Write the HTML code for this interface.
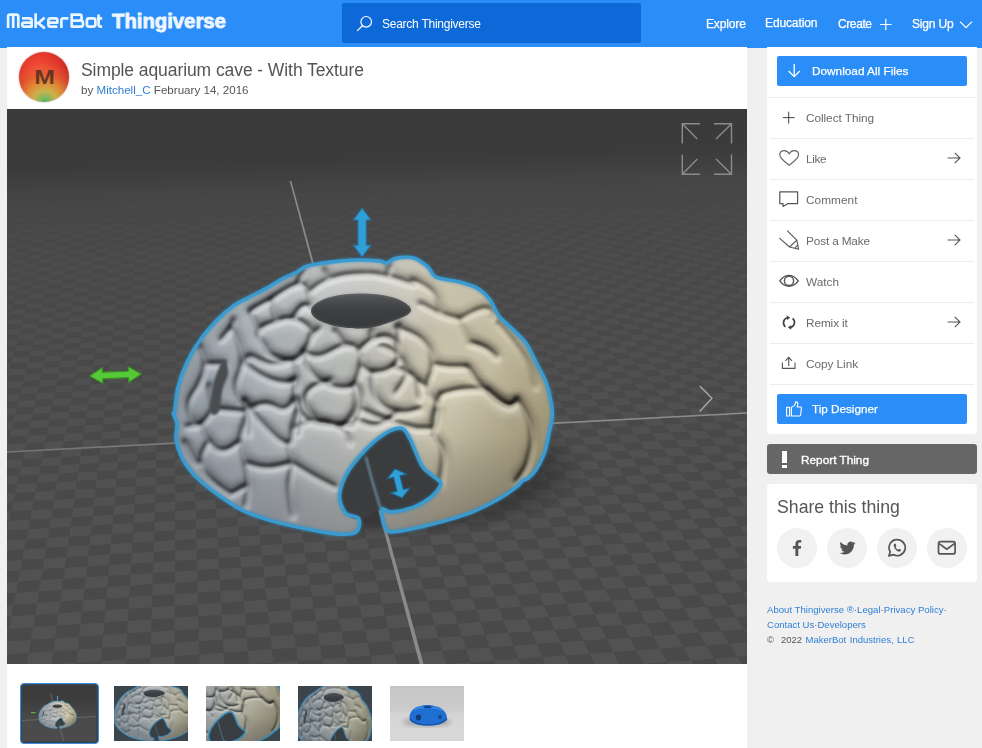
<!DOCTYPE html>
<html>
<head>
<meta charset="utf-8">
<title>Simple aquarium cave - With Texture</title>
<style>
*{box-sizing:border-box;margin:0;padding:0}
html,body{width:982px;height:748px;overflow:hidden}
body{background:#f0f0f0;font-family:"Liberation Sans",sans-serif;color:#555;position:relative}
a{text-decoration:none;color:#2f7fd6}
.abs{position:absolute}
.row,.nav,.ft,#title,#by,.btn span,#report span,#search span,.gs{will-change:transform}
#hdr{position:absolute;left:0;top:0;width:982px;height:47.5px;background:#2b8df7}
#search{position:absolute;left:342px;top:3px;width:299px;height:40px;background:#0d68d8;border-radius:2px}
#search span{position:absolute;left:40px;top:14px;font-size:12px;color:#fff;letter-spacing:-0.25px;white-space:nowrap}
.nav{position:absolute;top:17px;font-size:12px;color:#fff;white-space:nowrap;-webkit-text-stroke:.25px #fff}
#main{position:absolute;left:7px;top:47px;width:740px;height:701px;background:#fff}
#title{position:absolute;left:80.5px;top:60px;font-size:17.5px;color:#555;white-space:nowrap;letter-spacing:-0.08px}
#by{position:absolute;left:81px;top:82.5px;font-size:11.6px;color:#555;white-space:nowrap}
#viewer{position:absolute;left:7px;top:109px;width:740px;height:555px;background:#3b3b3b;overflow:hidden}
.th{position:absolute;top:685.5px;width:74px;height:55px;background:#444;overflow:hidden}
#side{position:absolute;left:767px;top:47px;width:210px;height:387px;background:#fff;border-radius:0 0 4px 4px}
.btn{position:absolute;left:777px;width:190px;height:30px;background:#2b8df7;border-radius:2px;color:#fff;font-size:12px}
.btn span{position:absolute;left:35px;top:8px;white-space:nowrap;-webkit-text-stroke:.25px #fff}
.sep{position:absolute;left:770px;width:204px;height:1px;background:#ededed}
.row{position:absolute;left:806px;font-size:11.8px;color:#6a6a6a;white-space:nowrap}
.ico{position:absolute}
#report{position:absolute;left:767px;top:444px;width:210px;height:30px;background:#666;border-radius:3px;color:#fff;font-size:12px}
#share{position:absolute;left:767px;top:484px;width:210px;height:98px;background:#fff;border-radius:4px}
.circ{position:absolute;top:528px;width:40px;height:40px;border-radius:20px;background:#f1f1f1}
.ft{position:absolute;left:767px;font-size:9.5px;color:#555;white-space:nowrap}
</style>
</head>
<body>
<div id="hdr">
  <svg class="abs" style="left:0;top:0" width="240" height="47" viewBox="0 0 240 47">
    <g fill="none" stroke="#eaf5ff" stroke-width="2.7" stroke-linejoin="round" stroke-linecap="butt">
      <path d="M8.1,28 V16.6 Q8.1,14.6 10.1,14.6 H16.3 Q18.3,14.6 18.3,16.6 V28 M13.2,14.6 V28"/>
      <path d="M22,18.4 H29.6 Q31.6,18.4 31.6,20.4 V26.6 H24 Q22.2,26.6 22.2,24.6 Q22.2,22.6 24,22.6 H31.6"/>
      <path d="M35.6,13.3 V28 M35.6,23.2 H38.4 L44.6,17.6 M38.4,23.2 L44.8,28.4"/>
      <path d="M57.4,26.6 H50.4 Q48.4,26.6 48.4,24.6 V20.4 Q48.4,18.4 50.4,18.4 H55.4 Q57.4,18.4 57.4,20.4 V22.6 H48.4"/>
      <path d="M61.4,28 V20.4 Q61.4,18.4 63.4,18.4 H68.4"/>
      <path d="M71.7,13.3 V26.6 H81 Q83,26.6 83,24.6 V22.6 Q83,20.6 81,20.6 H71.7 M70.4,14.6 H79.6 Q81.6,14.6 81.6,16.6 V18.6 Q81.6,20.6 79.6,20.6"/>
      <path d="M88.9,18.4 H93.4 Q95.4,18.4 95.4,20.4 V24.6 Q95.4,26.6 93.4,26.6 H88.9 Q86.9,26.6 86.9,24.6 V20.4 Q86.9,18.4 88.9,18.4 Z"/>
      <path d="M98.6,14.6 V24.6 Q98.6,26.6 100.6,26.6 H102.2 M97,18.4 H102.2"/>
    </g>
    <text x="112" y="28.2" font-family="Liberation Sans, sans-serif" font-weight="bold" font-size="20.3" fill="#eef7ff" stroke="#eef7ff" stroke-width="0.8">Thingiverse</text>
  </svg>
  <div id="search"><span>Search Thingiverse</span>
    <svg class="abs" style="left:13px;top:12px" width="20" height="18" viewBox="0 0 20 18"><circle cx="11.2" cy="6.8" r="5.3" fill="none" stroke="#fff" stroke-width="1.2"/><path d="M7.4,10.8 L2.4,15.6" stroke="#fff" stroke-width="1.3" stroke-linecap="round"/></svg>
  </div>
  <div class="nav" style="left:705.5px;letter-spacing:-0.13px">Explore</div>
  <div class="nav" style="left:765px;top:16px;letter-spacing:-0.12px">Education</div>
  <div class="nav" style="left:837.5px;letter-spacing:-0.4px">Create</div>
  <svg class="abs" style="left:879px;top:18px" width="14" height="14" viewBox="0 0 14 14"><path d="M1,6.5 H12.6 M6.8,0.7 V12.3" stroke="#fff" stroke-width="1.2" fill="none"/></svg>
  <div class="nav" style="left:911.5px;letter-spacing:-0.17px">Sign Up</div>
  <svg class="abs" style="left:959px;top:20px" width="14" height="10" viewBox="0 0 14 10"><path d="M1,1.6 L7,7.6 L13,1.6" stroke="#fff" stroke-width="1.2" fill="none"/></svg>
</div>
<div id="main"></div>
<div class="abs" style="left:19.2px;top:52px;width:49.6px;height:49.6px;border-radius:50%;background:radial-gradient(circle at 52% 100%,#4fb26a 0,#86b85a 9%,#c9b24c 20%,rgba(224,150,55,.9) 34%,rgba(228,110,48,.55) 50%,rgba(228,80,45,0) 72%),radial-gradient(circle at 40% 36%,#f4503a 0,#e63c2e 35%,#d22c28 60%,#a81a22 86%,#8a1a20 100%);box-shadow:0 0 1.5px rgba(120,20,20,.6)"></div>
<div class="abs" style="left:34px;top:66px;width:21px;height:23px;font-weight:bold;font-size:20px;line-height:23px;text-align:center;color:rgba(84,44,32,.85);transform:scaleX(1.24);">M</div>
<div id="title">Simple aquarium cave - With Texture</div>
<div id="by">by <a>Mitchell_C</a> February 14, 2016</div>
<!--VIEW_START--><div id="viewer">
<svg class="abs" style="left:0;top:0" width="740" height="555" viewBox="0 0 740 555"><defs><clipPath id="cu0"><path d="M-114.4,84.9 -102.3,84.5 -481.7,684.2 -511.4,686.4ZM-90.3,84.1 -78.3,83.8 -422.6,679.7 -452.1,681.9ZM-66.3,83.4 -54.3,83.0 -364.0,675.2 -393.2,677.4ZM-42.4,82.6 -30.5,82.2 -306.0,670.8 -335.0,673.0ZM-18.6,81.8 -6.7,81.4 -248.5,666.4 -277.2,668.6ZM5.2,81.0 17.0,80.7 -191.4,662.0 -219.9,664.2ZM28.8,80.3 40.6,79.9 -134.9,657.7 -163.1,659.9ZM52.4,79.5 64.2,79.1 -78.8,653.5 -106.8,655.6ZM75.9,78.7 87.6,78.4 -23.2,649.2 -51.0,651.3ZM99.3,78.0 111.0,77.6 31.9,645.0 4.4,647.1ZM122.6,77.2 134.2,76.9 86.5,640.9 59.3,642.9ZM145.8,76.5 157.4,76.1 140.7,636.7 113.7,638.8ZM169.0,75.7 180.5,75.4 194.4,632.6 167.6,634.7ZM192.0,75.0 203.5,74.6 247.7,628.6 221.1,630.6ZM215.0,74.2 226.5,73.9 300.6,624.5 274.2,626.6ZM237.9,73.5 249.3,73.1 353.0,620.5 326.8,622.5ZM260.7,72.7 272.1,72.4 404.9,616.6 379.0,618.6ZM283.5,72.0 294.8,71.6 456.5,612.7 430.8,614.6ZM306.1,71.3 317.4,70.9 507.6,608.8 482.1,610.7ZM328.7,70.5 339.9,70.2 558.3,604.9 533.0,606.8ZM351.2,69.8 362.4,69.4 608.6,601.1 583.5,603.0ZM373.6,69.1 384.8,68.7 658.5,597.3 633.6,599.2ZM395.9,68.4 407.0,68.0 707.9,593.5 683.2,595.4ZM418.2,67.6 429.3,67.3 757.0,589.8 732.5,591.6ZM440.3,66.9 451.4,66.6 805.7,586.0 781.4,587.9ZM462.4,66.2 473.4,65.8 854.0,582.4 829.9,584.2ZM484.4,65.5 495.4,65.1 901.9,578.7 878.0,580.5ZM506.4,64.8 517.3,64.4 949.5,575.1 925.8,576.9ZM528.2,64.1 539.1,63.7 996.6,571.5 973.1,573.3ZM550.0,63.4 560.9,63.0 1043.4,567.9 1020.1,569.7ZM571.7,62.7 582.6,62.3 1089.9,564.4 1066.7,566.2ZM593.4,61.9 604.1,61.6 1135.9,560.9 1113.0,562.6ZM614.9,61.2 625.7,60.9 1181.7,557.4 1158.8,559.1ZM636.4,60.6 647.1,60.2 1227.0,553.9 1204.4,555.7ZM657.8,59.9 668.5,59.5 1272.0,550.5 1249.6,552.2ZM679.1,59.2 689.8,58.8 1316.7,547.1 1294.4,548.8ZM700.4,58.5 711.0,58.1 1361.0,543.7 1338.9,545.4ZM721.6,57.8 732.1,57.4 1405.0,540.4 1383.1,542.0ZM742.7,57.1 753.2,56.8 1448.7,537.0 1426.9,538.7ZM763.7,56.4 774.2,56.1 1492.0,533.7 1470.4,535.4ZM784.7,55.7 795.2,55.4 1535.0,530.5 1513.6,532.1ZM805.6,55.1 816.0,54.7 1577.7,527.2 1556.4,528.8ZM826.4,54.4 836.8,54.0 1620.1,524.0 1598.9,525.6ZM847.2,53.7 857.5,53.4 1662.1,520.8 1641.1,522.4ZM867.8,53.0 878.2,52.7 1703.9,517.6 1683.0,519.2ZM888.5,52.4 898.7,52.0 1745.3,514.4 1724.6,516.0ZM909.0,51.7 919.2,51.4 1786.4,511.3 1765.9,512.9Z"/></clipPath><clipPath id="cu1"><path d="M-102.3,84.5 -90.3,84.1 -452.1,681.9 -481.7,684.2ZM-78.3,83.8 -66.3,83.4 -393.2,677.4 -422.6,679.7ZM-54.3,83.0 -42.4,82.6 -335.0,673.0 -364.0,675.2ZM-30.5,82.2 -18.6,81.8 -277.2,668.6 -306.0,670.8ZM-6.7,81.4 5.2,81.0 -219.9,664.2 -248.5,666.4ZM17.0,80.7 28.8,80.3 -163.1,659.9 -191.4,662.0ZM40.6,79.9 52.4,79.5 -106.8,655.6 -134.9,657.7ZM64.2,79.1 75.9,78.7 -51.0,651.3 -78.8,653.5ZM87.6,78.4 99.3,78.0 4.4,647.1 -23.2,649.2ZM111.0,77.6 122.6,77.2 59.3,642.9 31.9,645.0ZM134.2,76.9 145.8,76.5 113.7,638.8 86.5,640.9ZM157.4,76.1 169.0,75.7 167.6,634.7 140.7,636.7ZM180.5,75.4 192.0,75.0 221.1,630.6 194.4,632.6ZM203.5,74.6 215.0,74.2 274.2,626.6 247.7,628.6ZM226.5,73.9 237.9,73.5 326.8,622.5 300.6,624.5ZM249.3,73.1 260.7,72.7 379.0,618.6 353.0,620.5ZM272.1,72.4 283.5,72.0 430.8,614.6 404.9,616.6ZM294.8,71.6 306.1,71.3 482.1,610.7 456.5,612.7ZM317.4,70.9 328.7,70.5 533.0,606.8 507.6,608.8ZM339.9,70.2 351.2,69.8 583.5,603.0 558.3,604.9ZM362.4,69.4 373.6,69.1 633.6,599.2 608.6,601.1ZM384.8,68.7 395.9,68.4 683.2,595.4 658.5,597.3ZM407.0,68.0 418.2,67.6 732.5,591.6 707.9,593.5ZM429.3,67.3 440.3,66.9 781.4,587.9 757.0,589.8ZM451.4,66.6 462.4,66.2 829.9,584.2 805.7,586.0ZM473.4,65.8 484.4,65.5 878.0,580.5 854.0,582.4ZM495.4,65.1 506.4,64.8 925.8,576.9 901.9,578.7ZM517.3,64.4 528.2,64.1 973.1,573.3 949.5,575.1ZM539.1,63.7 550.0,63.4 1020.1,569.7 996.6,571.5ZM560.9,63.0 571.7,62.7 1066.7,566.2 1043.4,567.9ZM582.6,62.3 593.4,61.9 1113.0,562.6 1089.9,564.4ZM604.1,61.6 614.9,61.2 1158.8,559.1 1135.9,560.9ZM625.7,60.9 636.4,60.6 1204.4,555.7 1181.7,557.4ZM647.1,60.2 657.8,59.9 1249.6,552.2 1227.0,553.9ZM668.5,59.5 679.1,59.2 1294.4,548.8 1272.0,550.5ZM689.8,58.8 700.4,58.5 1338.9,545.4 1316.7,547.1ZM711.0,58.1 721.6,57.8 1383.1,542.0 1361.0,543.7ZM732.1,57.4 742.7,57.1 1426.9,538.7 1405.0,540.4ZM753.2,56.8 763.7,56.4 1470.4,535.4 1448.7,537.0ZM774.2,56.1 784.7,55.7 1513.6,532.1 1492.0,533.7ZM795.2,55.4 805.6,55.1 1556.4,528.8 1535.0,530.5ZM816.0,54.7 826.4,54.4 1598.9,525.6 1577.7,527.2ZM836.8,54.0 847.2,53.7 1641.1,522.4 1620.1,524.0ZM857.5,53.4 867.8,53.0 1683.0,519.2 1662.1,520.8ZM878.2,52.7 888.5,52.4 1724.6,516.0 1703.9,517.6ZM898.7,52.0 909.0,51.7 1765.9,512.9 1745.3,514.4ZM919.2,51.4 929.5,51.0 1806.9,509.7 1786.4,511.3Z"/></clipPath></defs><path d="M-114.4,84.9 929.5,51.0 1806.9,509.7 -511.4,686.4Z" fill="#494949"/><path d="M-114.4,84.9 929.5,51.0 934.5,53.7 -116.5,88.0ZM-118.6,91.2 939.6,56.4 944.8,59.1 -120.7,94.4ZM-122.8,97.7 950.1,61.8 955.4,64.6 -125.0,101.0ZM-127.2,104.4 960.9,67.5 966.3,70.3 -129.5,107.8ZM-131.8,111.2 971.9,73.2 977.6,76.2 -134.1,114.8ZM-136.4,118.3 983.3,79.2 989.1,82.2 -138.8,122.0ZM-141.3,125.6 995.0,85.3 1000.9,88.4 -143.7,129.4ZM-146.3,133.2 1007.0,91.6 1013.2,94.8 -148.8,137.0ZM-151.4,141.0 1019.4,98.1 1025.7,101.4 -154.0,145.0ZM-156.7,149.0 1032.2,104.7 1038.7,108.1 -159.4,153.1ZM-162.2,157.3 1045.3,111.6 1052.0,115.1 -165.0,161.6ZM-167.9,165.9 1058.9,118.7 1065.8,122.3 -170.8,170.3ZM-173.7,174.8 1072.9,126.0 1080.0,129.7 -176.8,179.4ZM-179.8,184.1 1087.3,133.5 1094.7,137.4 -183.0,188.8ZM-186.1,193.6 1102.2,141.3 1109.8,145.3 -189.4,198.5ZM-192.7,203.5 1117.6,149.4 1125.5,153.5 -196.0,208.6ZM-199.4,213.8 1133.5,157.7 1141.7,162.0 -202.9,219.0ZM-206.5,224.4 1149.9,166.3 1158.4,170.7 -210.1,229.9ZM-213.8,235.5 1167.0,175.2 1175.7,179.8 -217.5,241.2ZM-221.4,247.0 1184.6,184.4 1193.7,189.2 -225.3,252.9ZM-229.3,259.0 1202.9,194.0 1212.2,198.9 -233.4,265.2ZM-237.5,271.5 1221.8,203.9 1231.5,209.0 -241.8,277.9ZM-246.1,284.5 1241.4,214.1 1251.5,219.4 -250.5,291.2ZM-255.0,298.0 1261.8,224.8 1272.3,230.3 -259.7,305.0ZM-264.4,312.2 1283.0,235.9 1293.9,241.6 -269.2,319.5ZM-274.1,326.9 1305.0,247.4 1316.4,253.3 -279.2,334.6ZM-284.3,342.4 1327.9,259.3 1339.7,265.5 -289.6,350.4ZM-295.0,358.6 1351.8,271.8 1364.1,278.2 -300.6,367.0ZM-306.2,375.6 1376.6,284.8 1389.4,291.5 -312.0,384.4ZM-318.0,393.4 1402.5,298.4 1415.9,305.4 -324.1,402.6ZM-330.3,412.1 1429.6,312.5 1443.6,319.8 -336.7,421.8ZM-343.3,431.8 1457.9,327.3 1472.5,334.9 -350.1,442.0ZM-357.0,452.5 1487.4,342.7 1502.7,350.7 -364.1,463.3ZM-371.4,474.4 1518.4,358.9 1534.4,367.3 -379.0,485.8ZM-386.7,497.5 1550.8,375.9 1567.7,384.7 -394.6,509.5ZM-402.8,521.9 1584.9,393.7 1602.5,402.9 -411.2,534.7ZM-419.9,547.8 1620.7,412.4 1639.2,422.1 -428.8,561.3ZM-438.0,575.3 1658.3,432.1 1677.8,442.3 -447.5,589.7ZM-457.3,604.5 1697.9,452.8 1718.5,463.6 -467.4,619.8ZM-477.9,635.7 1739.7,474.6 1761.5,486.0 -488.7,652.0ZM-499.8,668.9 1783.9,497.7 1806.9,509.7 -511.4,686.4Z" fill="#525252" clip-path="url(#cu0)"/><path d="M-116.5,88.0 934.5,53.7 939.6,56.4 -118.6,91.2ZM-120.7,94.4 944.8,59.1 950.1,61.8 -122.8,97.7ZM-125.0,101.0 955.4,64.6 960.9,67.5 -127.2,104.4ZM-129.5,107.8 966.3,70.3 971.9,73.2 -131.8,111.2ZM-134.1,114.8 977.6,76.2 983.3,79.2 -136.4,118.3ZM-138.8,122.0 989.1,82.2 995.0,85.3 -141.3,125.6ZM-143.7,129.4 1000.9,88.4 1007.0,91.6 -146.3,133.2ZM-148.8,137.0 1013.2,94.8 1019.4,98.1 -151.4,141.0ZM-154.0,145.0 1025.7,101.4 1032.2,104.7 -156.7,149.0ZM-159.4,153.1 1038.7,108.1 1045.3,111.6 -162.2,157.3ZM-165.0,161.6 1052.0,115.1 1058.9,118.7 -167.9,165.9ZM-170.8,170.3 1065.8,122.3 1072.9,126.0 -173.7,174.8ZM-176.8,179.4 1080.0,129.7 1087.3,133.5 -179.8,184.1ZM-183.0,188.8 1094.7,137.4 1102.2,141.3 -186.1,193.6ZM-189.4,198.5 1109.8,145.3 1117.6,149.4 -192.7,203.5ZM-196.0,208.6 1125.5,153.5 1133.5,157.7 -199.4,213.8ZM-202.9,219.0 1141.7,162.0 1149.9,166.3 -206.5,224.4ZM-210.1,229.9 1158.4,170.7 1167.0,175.2 -213.8,235.5ZM-217.5,241.2 1175.7,179.8 1184.6,184.4 -221.4,247.0ZM-225.3,252.9 1193.7,189.2 1202.9,194.0 -229.3,259.0ZM-233.4,265.2 1212.2,198.9 1221.8,203.9 -237.5,271.5ZM-241.8,277.9 1231.5,209.0 1241.4,214.1 -246.1,284.5ZM-250.5,291.2 1251.5,219.4 1261.8,224.8 -255.0,298.0ZM-259.7,305.0 1272.3,230.3 1283.0,235.9 -264.4,312.2ZM-269.2,319.5 1293.9,241.6 1305.0,247.4 -274.1,326.9ZM-279.2,334.6 1316.4,253.3 1327.9,259.3 -284.3,342.4ZM-289.6,350.4 1339.7,265.5 1351.8,271.8 -295.0,358.6ZM-300.6,367.0 1364.1,278.2 1376.6,284.8 -306.2,375.6ZM-312.0,384.4 1389.4,291.5 1402.5,298.4 -318.0,393.4ZM-324.1,402.6 1415.9,305.4 1429.6,312.5 -330.3,412.1ZM-336.7,421.8 1443.6,319.8 1457.9,327.3 -343.3,431.8ZM-350.1,442.0 1472.5,334.9 1487.4,342.7 -357.0,452.5ZM-364.1,463.3 1502.7,350.7 1518.4,358.9 -371.4,474.4ZM-379.0,485.8 1534.4,367.3 1550.8,375.9 -386.7,497.5ZM-394.6,509.5 1567.7,384.7 1584.9,393.7 -402.8,521.9ZM-411.2,534.7 1602.5,402.9 1620.7,412.4 -419.9,547.8ZM-428.8,561.3 1639.2,422.1 1658.3,432.1 -438.0,575.3ZM-447.5,589.7 1677.8,442.3 1697.9,452.8 -457.3,604.5ZM-467.4,619.8 1718.5,463.6 1739.7,474.6 -477.9,635.7ZM-488.7,652.0 1761.5,486.0 1783.9,497.7 -499.8,668.9Z" fill="#525252" clip-path="url(#cu1)"/></svg>
<div class="abs" style="left:0;top:0;width:740px;height:555px;background:linear-gradient(178.3deg,#3a3a3a 0,#3b3b3b 60px,#404040 76px,#444 86px,rgba(70,70,70,.86) 102px,rgba(71,71,71,.62) 140px,rgba(72,72,72,.38) 215px,rgba(72,72,72,.15) 330px,rgba(72,72,72,0) 460px)"></div>
<div class="abs" style="left:190px;top:290px;width:390px;height:140px;border-radius:50%;background:radial-gradient(closest-side,rgba(30,30,30,.6) 0,rgba(30,30,30,.5) 70%,rgba(30,30,30,0) 100%);"></div>

<svg class="abs" style="left:0;top:0" width="740" height="555" viewBox="0 0 740 555">
<defs>
<linearGradient id="dg" x1="0" y1="0" x2="1" y2="0"><stop offset="0" stop-color="#96a0a9"/><stop offset=".22" stop-color="#afb6bb"/><stop offset=".48" stop-color="#c4c6c2"/><stop offset=".72" stop-color="#d1c9ae"/><stop offset="1" stop-color="#c3b896"/></linearGradient>
<linearGradient id="dv" x1="0" y1="0" x2="0" y2="1"><stop offset="0" stop-color="#fff" stop-opacity=".2"/><stop offset=".4" stop-color="#fff" stop-opacity="0"/><stop offset=".65" stop-color="#223" stop-opacity="0"/><stop offset="1" stop-color="#223" stop-opacity=".28"/></linearGradient>
<clipPath id="dc"><path d="M167.7,302 C168.5,297.5 168.9,286.2 171,278 C173.1,269.8 176.1,261.2 180,253 C183.9,244.8 189.2,236.3 194.5,229 C199.8,221.7 206.8,214.3 212,209 C217.2,203.7 221.6,200.2 226,197 C230.4,193.8 233.2,192.8 238.5,190 C243.8,187.2 251.9,183.3 258,180 C264.1,176.7 269.7,172.8 275,170 C280.3,167.2 285.8,165.2 290,163 C294.2,160.8 294.3,158.7 300,157 C305.7,155.3 315.9,154.0 324,153 C332.1,152.0 340.3,151.2 348.5,151 C356.7,150.8 367.9,151.5 373,152 C378.1,152.5 376.2,154.5 379,154 C381.8,153.5 385.3,149.8 390,149 C394.7,148.2 401.8,147.5 407,149 C412.2,150.5 417.3,154.8 421,158 C424.7,161.2 424.0,165.6 429,168 C434.0,170.4 444.2,170.7 451,172.5 C457.8,174.3 464.8,176.1 470,179 C475.2,181.9 478.8,185.3 482.5,190 C486.2,194.7 488.3,202.2 492,207 C495.7,211.8 500.0,214.5 504.5,219 C509.0,223.5 514.9,228.3 519,234 C523.1,239.7 525.7,246.5 529,253 C532.3,259.5 536.6,266.8 539,273 C541.4,279.2 542.5,284.5 543.6,290 C544.7,295.5 545.7,300.5 545.5,306 C545.3,311.5 543.7,316.7 542.4,323 C541.1,329.3 539.7,337.7 537.5,344 C535.3,350.3 531.6,356.8 529,361 C526.4,365.2 523.9,367.2 521.6,369 C519.4,370.8 517.6,370.4 515.5,372 C513.4,373.6 513.2,375.3 509,378.5 C504.8,381.7 497.7,386.8 490,391 C482.3,395.2 473.7,400.0 463,404 C452.3,408.0 438.2,411.9 426,415 C413.8,418.1 397.8,421.7 390,422.5 C382.2,423.3 381.5,423.7 379,420 C376.5,416.3 374.0,403.3 375,400.5 C376.0,397.7 379.7,403.4 385,403 C390.3,402.6 400.5,400.5 407,398 C413.5,395.5 419.6,391.7 424,388 C428.4,384.3 432.4,378.8 433.6,376 C434.8,373.2 433.9,373.8 431,371 C428.1,368.2 420.2,363.5 416.5,359 C412.8,354.5 411.2,348.8 409,344 C406.8,339.2 405.2,334.0 403,330 C400.8,326.0 399.0,321.5 396,320 C393.0,318.5 389.7,319.0 385,321 C380.3,323.0 373.3,327.7 368,332 C362.7,336.3 357.3,342.2 353,347 C348.7,351.8 344.8,356.7 342,361 C339.2,365.3 337.6,368.5 336,373 C334.4,377.5 332.2,382.8 332.6,388 C333.1,393.2 335.5,400.3 338.7,404 C341.9,407.7 350.4,406.7 352,410 C353.6,413.3 352.3,421.2 348.5,423.7 C344.7,426.2 337.1,425.6 329,425 C320.9,424.4 310.6,422.2 299.6,420 C288.6,417.8 274.0,414.8 263,411.5 C252.0,408.2 242.9,405.2 233.6,400.5 C224.3,395.8 214.8,388.8 207,383 C199.2,377.2 192.3,371.7 187,366 C181.7,360.3 178.0,355.0 175,349 C172.0,343.0 169.8,335.7 169,330 C168.2,324.3 170.4,319.2 170,315 C169.6,310.8 166.8,307.2 166.4,305 C166.0,302.8 166.9,306.5 167.7,302 Z"/></clipPath>
<filter id="lit" x="0" y="0" width="100%" height="100%" color-interpolation-filters="sRGB">
<feGaussianBlur stdDeviation="2.2" result="b0"/>
<feColorMatrix in="b0" type="luminanceToAlpha" result="b"/>
<feDiffuseLighting in="b" surfaceScale="2.6" diffuseConstant="0.66" lighting-color="#fff" result="l"><feDistantLight azimuth="250" elevation="45"/></feDiffuseLighting>
</filter>
<filter id="lit2" x="0" y="0" width="100%" height="100%" color-interpolation-filters="sRGB">
<feGaussianBlur stdDeviation="5" result="b0"/>
<feColorMatrix in="b0" type="luminanceToAlpha" result="b"/>
<feDiffuseLighting in="b" surfaceScale="9" diffuseConstant="0.68" lighting-color="#fff"><feDistantLight azimuth="270" elevation="48"/></feDiffuseLighting>
</filter>
<filter id="bl"><feGaussianBlur stdDeviation="1.2"/></filter>
<filter id="bl2"><feGaussianBlur stdDeviation="3"/></filter>
</defs>
<defs><linearGradient id="xg" x1="0" y1="0" x2="1" y2="0"><stop offset="0" stop-color="#6e6e6e"/><stop offset=".4" stop-color="#808080"/><stop offset="1" stop-color="#8e8e8e"/></linearGradient></defs>
<path d="M-117.4,349.2 L788.8,301.5" stroke="url(#xg)" stroke-width="1.6" fill="none"/>
<path d="M282.7,72.0 L284.3,72.0 L420.8,570.6 L416.8,570.6 Z" fill="#8a8a8a"/>
<g id="dm">
<path d="M167.7,302 C168.5,297.5 168.9,286.2 171,278 C173.1,269.8 176.1,261.2 180,253 C183.9,244.8 189.2,236.3 194.5,229 C199.8,221.7 206.8,214.3 212,209 C217.2,203.7 221.6,200.2 226,197 C230.4,193.8 233.2,192.8 238.5,190 C243.8,187.2 251.9,183.3 258,180 C264.1,176.7 269.7,172.8 275,170 C280.3,167.2 285.8,165.2 290,163 C294.2,160.8 294.3,158.7 300,157 C305.7,155.3 315.9,154.0 324,153 C332.1,152.0 340.3,151.2 348.5,151 C356.7,150.8 367.9,151.5 373,152 C378.1,152.5 376.2,154.5 379,154 C381.8,153.5 385.3,149.8 390,149 C394.7,148.2 401.8,147.5 407,149 C412.2,150.5 417.3,154.8 421,158 C424.7,161.2 424.0,165.6 429,168 C434.0,170.4 444.2,170.7 451,172.5 C457.8,174.3 464.8,176.1 470,179 C475.2,181.9 478.8,185.3 482.5,190 C486.2,194.7 488.3,202.2 492,207 C495.7,211.8 500.0,214.5 504.5,219 C509.0,223.5 514.9,228.3 519,234 C523.1,239.7 525.7,246.5 529,253 C532.3,259.5 536.6,266.8 539,273 C541.4,279.2 542.5,284.5 543.6,290 C544.7,295.5 545.7,300.5 545.5,306 C545.3,311.5 543.7,316.7 542.4,323 C541.1,329.3 539.7,337.7 537.5,344 C535.3,350.3 531.6,356.8 529,361 C526.4,365.2 523.9,367.2 521.6,369 C519.4,370.8 517.6,370.4 515.5,372 C513.4,373.6 513.2,375.3 509,378.5 C504.8,381.7 497.7,386.8 490,391 C482.3,395.2 473.7,400.0 463,404 C452.3,408.0 438.2,411.9 426,415 C413.8,418.1 397.8,421.7 390,422.5 C382.2,423.3 381.5,423.7 379,420 C376.5,416.3 374.0,403.3 375,400.5 C376.0,397.7 379.7,403.4 385,403 C390.3,402.6 400.5,400.5 407,398 C413.5,395.5 419.6,391.7 424,388 C428.4,384.3 432.4,378.8 433.6,376 C434.8,373.2 433.9,373.8 431,371 C428.1,368.2 420.2,363.5 416.5,359 C412.8,354.5 411.2,348.8 409,344 C406.8,339.2 405.2,334.0 403,330 C400.8,326.0 399.0,321.5 396,320 C393.0,318.5 389.7,319.0 385,321 C380.3,323.0 373.3,327.7 368,332 C362.7,336.3 357.3,342.2 353,347 C348.7,351.8 344.8,356.7 342,361 C339.2,365.3 337.6,368.5 336,373 C334.4,377.5 332.2,382.8 332.6,388 C333.1,393.2 335.5,400.3 338.7,404 C341.9,407.7 350.4,406.7 352,410 C353.6,413.3 352.3,421.2 348.5,423.7 C344.7,426.2 337.1,425.6 329,425 C320.9,424.4 310.6,422.2 299.6,420 C288.6,417.8 274.0,414.8 263,411.5 C252.0,408.2 242.9,405.2 233.6,400.5 C224.3,395.8 214.8,388.8 207,383 C199.2,377.2 192.3,371.7 187,366 C181.7,360.3 178.0,355.0 175,349 C172.0,343.0 169.8,335.7 169,330 C168.2,324.3 170.4,319.2 170,315 C169.6,310.8 166.8,307.2 166.4,305 C166.0,302.8 166.9,306.5 167.7,302 Z" fill="url(#dg)"/>
<path d="M167.7,302 C168.5,297.5 168.9,286.2 171,278 C173.1,269.8 176.1,261.2 180,253 C183.9,244.8 189.2,236.3 194.5,229 C199.8,221.7 206.8,214.3 212,209 C217.2,203.7 221.6,200.2 226,197 C230.4,193.8 233.2,192.8 238.5,190 C243.8,187.2 251.9,183.3 258,180 C264.1,176.7 269.7,172.8 275,170 C280.3,167.2 285.8,165.2 290,163 C294.2,160.8 294.3,158.7 300,157 C305.7,155.3 315.9,154.0 324,153 C332.1,152.0 340.3,151.2 348.5,151 C356.7,150.8 367.9,151.5 373,152 C378.1,152.5 376.2,154.5 379,154 C381.8,153.5 385.3,149.8 390,149 C394.7,148.2 401.8,147.5 407,149 C412.2,150.5 417.3,154.8 421,158 C424.7,161.2 424.0,165.6 429,168 C434.0,170.4 444.2,170.7 451,172.5 C457.8,174.3 464.8,176.1 470,179 C475.2,181.9 478.8,185.3 482.5,190 C486.2,194.7 488.3,202.2 492,207 C495.7,211.8 500.0,214.5 504.5,219 C509.0,223.5 514.9,228.3 519,234 C523.1,239.7 525.7,246.5 529,253 C532.3,259.5 536.6,266.8 539,273 C541.4,279.2 542.5,284.5 543.6,290 C544.7,295.5 545.7,300.5 545.5,306 C545.3,311.5 543.7,316.7 542.4,323 C541.1,329.3 539.7,337.7 537.5,344 C535.3,350.3 531.6,356.8 529,361 C526.4,365.2 523.9,367.2 521.6,369 C519.4,370.8 517.6,370.4 515.5,372 C513.4,373.6 513.2,375.3 509,378.5 C504.8,381.7 497.7,386.8 490,391 C482.3,395.2 473.7,400.0 463,404 C452.3,408.0 438.2,411.9 426,415 C413.8,418.1 397.8,421.7 390,422.5 C382.2,423.3 381.5,423.7 379,420 C376.5,416.3 374.0,403.3 375,400.5 C376.0,397.7 379.7,403.4 385,403 C390.3,402.6 400.5,400.5 407,398 C413.5,395.5 419.6,391.7 424,388 C428.4,384.3 432.4,378.8 433.6,376 C434.8,373.2 433.9,373.8 431,371 C428.1,368.2 420.2,363.5 416.5,359 C412.8,354.5 411.2,348.8 409,344 C406.8,339.2 405.2,334.0 403,330 C400.8,326.0 399.0,321.5 396,320 C393.0,318.5 389.7,319.0 385,321 C380.3,323.0 373.3,327.7 368,332 C362.7,336.3 357.3,342.2 353,347 C348.7,351.8 344.8,356.7 342,361 C339.2,365.3 337.6,368.5 336,373 C334.4,377.5 332.2,382.8 332.6,388 C333.1,393.2 335.5,400.3 338.7,404 C341.9,407.7 350.4,406.7 352,410 C353.6,413.3 352.3,421.2 348.5,423.7 C344.7,426.2 337.1,425.6 329,425 C320.9,424.4 310.6,422.2 299.6,420 C288.6,417.8 274.0,414.8 263,411.5 C252.0,408.2 242.9,405.2 233.6,400.5 C224.3,395.8 214.8,388.8 207,383 C199.2,377.2 192.3,371.7 187,366 C181.7,360.3 178.0,355.0 175,349 C172.0,343.0 169.8,335.7 169,330 C168.2,324.3 170.4,319.2 170,315 C169.6,310.8 166.8,307.2 166.4,305 C166.0,302.8 166.9,306.5 167.7,302 Z" fill="url(#dv)"/>
<defs><radialGradient id="lobe" cx="450" cy="285" r="70" gradientUnits="userSpaceOnUse"><stop offset="0" stop-color="#fffbe8" stop-opacity=".24"/><stop offset="1" stop-color="#fffbe8" stop-opacity="0"/></radialGradient><linearGradient id="lobd" x1="455" y1="290" x2="545" y2="375" gradientUnits="userSpaceOnUse"><stop offset="0" stop-color="#4a4028" stop-opacity="0"/><stop offset="1" stop-color="#4a4028" stop-opacity=".34"/></linearGradient><radialGradient id="rim" cx="354" cy="200" r="75" gradientUnits="userSpaceOnUse" gradientTransform="translate(354 200) scale(1 .5) translate(-354 -200)"><stop offset="0" stop-color="#fff" stop-opacity=".2"/><stop offset=".75" stop-color="#fff" stop-opacity=".14"/><stop offset="1" stop-color="#fff" stop-opacity="0"/></radialGradient></defs>
<g clip-path="url(#dc)"><rect x="370" y="210" width="160" height="150" fill="url(#lobe)"/><rect x="150" y="140" width="410" height="300" fill="url(#lobd)"/><rect x="270" y="150" width="170" height="100" fill="url(#rim)"/></g>
<defs><g id="ck" fill="none" stroke-linecap="round" stroke-linejoin="round">
<path d="M224.5,218.4 C226.3,222.7 229.9,228.3 232.4,236.9 C234.9,245.5 235.7,246.7 235.1,255.4 C234.5,264.1 230.4,265.9 229.8,274.0 C229.2,282.1 229.9,283.7 232.4,289.9 C234.9,296.1 238.2,292.0 240.4,300.4 C242.6,308.8 241.4,319.9 241.7,325.9" stroke-width="2.2"/>
<path d="M252.3,222.3 C249.5,227.9 254.2,231.0 257.6,236.9 C261.0,242.8 260.3,244.1 266.8,247.5 C273.3,250.9 278.3,252.7 285.4,251.5 C292.5,250.3 293.0,247.4 297.3,242.2 C301.6,236.9 303.0,234.6 303.9,229.0 C304.8,223.4 305.6,222.7 301.3,218.4 C297.0,214.1 292.8,211.6 285.4,210.4 C278.0,209.2 277.2,210.3 269.5,213.1 C261.8,215.9 255.1,216.7 252.3,222.3 Z" stroke-width="2.2"/>
<path d="M237.7,255.4 C238.9,253.6 236.8,247.5 243.0,247.5 C249.2,247.5 254.3,254.5 264.2,255.4 C274.1,256.3 280.5,252.4 285.4,251.5" stroke-width="2.2"/>
<path d="M285.4,251.5 C286.6,255.5 290.1,259.7 290.7,268.7 C291.3,277.7 287.4,280.0 288.0,289.9 C288.6,299.8 292.7,302.6 293.3,311.0 C293.9,319.4 291.3,322.4 290.7,325.9" stroke-width="2.2"/>
<path d="M297.3,242.2 C300.7,243.4 302.3,248.7 311.9,247.5 C321.5,246.3 329.0,238.1 338.3,236.9 C347.6,235.7 347.9,237.9 351.6,242.2 C355.3,246.5 354.8,248.0 354.2,255.4 C353.6,262.8 350.1,269.7 348.9,274.0" stroke-width="2.2"/>
<path d="M348.9,274.0 C346.4,275.2 345.7,279.3 338.3,279.3 C330.9,279.3 325.8,278.9 317.2,274.0 C308.6,269.1 305.9,265.5 301.3,258.1 C296.7,250.7 298.2,245.9 297.3,242.2" stroke-width="2.2"/>
<path d="M351.6,242.2 C354.7,239.7 357.4,234.7 364.8,231.6 C372.2,228.5 377.1,226.5 383.3,229.0 C389.5,231.5 390.7,235.4 391.3,242.2 C391.9,249.0 392.2,253.2 386.0,258.1 C379.8,263.0 372.2,264.0 364.8,263.4 C357.4,262.8 356.7,257.3 354.2,255.4" stroke-width="2.2"/>
<path d="M348.9,274.0 C350.1,277.7 354.2,281.3 354.2,289.9 C354.2,298.5 352.6,304.8 348.9,311.0 C345.2,317.2 349.4,316.3 338.3,316.3 C327.2,316.3 312.4,317.2 301.3,311.0 C290.2,304.8 293.2,294.8 290.7,289.9" stroke-width="2.2"/>
<path d="M240.4,300.4 C244.7,299.2 250.3,295.2 258.9,295.2 C267.5,295.2 270.6,301.6 277.4,300.4 C284.2,299.2 285.5,292.3 288.0,289.9" stroke-width="2.2"/>
<path d="M237.7,255.4 C242.6,258.5 249.0,264.4 258.9,268.7 C268.8,273.0 272.7,274.0 280.1,274.0 C287.5,274.0 288.2,269.9 290.7,268.7" stroke-width="2.2"/>
<path d="M304.4,199.8 C302.4,199.2 300.4,194.7 296.0,197.2 C291.6,199.7 287.9,207.3 285.4,210.4" stroke-width="2.2"/>
<path d="M311.9,219.7 C310.0,221.9 305.8,226.8 303.9,229.0" stroke-width="2.2"/>
<path d="M327.7,221.0 C330.2,224.7 335.8,233.2 338.3,236.9" stroke-width="2.2"/>
<path d="M364.8,219.7 C364.8,222.5 364.8,228.8 364.8,231.6" stroke-width="2.2"/>
<path d="M392.6,215.7 C392.3,221.9 391.6,236.0 391.3,242.2" stroke-width="2.2"/>
<path d="M264.2,190.6 C265.4,195.8 268.3,207.8 269.5,213.1" stroke-width="2.2"/>
<path d="M243.0,202.5 C245.2,207.1 250.1,217.7 252.3,222.3" stroke-width="2.2"/>
<path d="M227.1,210.4 C226.5,212.3 227.6,213.5 224.5,218.4 C221.4,223.3 216.4,228.5 213.9,231.6" stroke-width="2.2"/>
<path d="M264.2,190.6 C270.4,187.2 282.0,177.5 290.7,176.0 C299.4,174.5 298.1,178.4 301.3,184.0 C304.5,189.6 303.7,196.1 304.4,199.8" stroke-width="2.2"/>
<path d="M290.7,176.0 C291.9,172.9 294.8,165.9 296.0,162.8" stroke-width="2.2"/>
<path d="M243.0,202.5 C247.9,199.7 259.3,193.4 264.2,190.6" stroke-width="2.2"/>
<path d="M192.7,236.9 C193.9,241.2 198.0,246.7 198.0,255.4 C198.0,264.1 196.4,264.7 192.7,274.0 C189.0,283.3 183.3,285.3 182.1,295.2 C180.9,305.1 186.2,311.4 187.4,316.3" stroke-width="2.2"/>
<path d="M198.0,255.4 C202.6,255.4 213.3,255.4 217.9,255.4" stroke-width="2.2"/>
<path d="M301.3,184.0 C306.2,180.9 310.1,175.0 322.4,170.7 C334.7,166.4 340.6,166.0 354.2,165.4 C367.8,164.8 368.3,165.6 380.7,168.1 C393.1,170.6 401.0,174.2 407.2,176.0" stroke-width="1.6"/>
<path d="M322.4,170.7 C321.2,168.2 318.4,162.6 317.2,160.1" stroke-width="1.6"/>
<path d="M380.7,168.1 C381.3,165.3 382.7,159.0 383.3,156.2" stroke-width="1.6"/>
<path d="M386.0,258.1 C390.9,260.6 400.9,261.3 407.2,268.7 C413.5,276.1 411.6,285.0 413.0,289.9" stroke-width="2.2"/>
<path d="M364.8,263.4 C366.0,269.6 363.9,280.6 370.1,289.9 C376.3,299.2 381.3,300.7 391.3,303.1 C401.3,305.6 407.9,301.0 413.0,300.4" stroke-width="2.2"/>
<path d="M348.9,311.0 C353.8,312.2 360.2,318.1 370.1,316.3 C380.0,314.5 386.4,306.2 391.3,303.1" stroke-width="2.2"/>
<path d="M412.7,194.5 C417.6,197.0 424.6,201.4 433.9,205.1 C443.2,208.8 448.1,209.2 452.4,210.4" stroke-width="1.8"/>
<path d="M463.0,234.3 C466.7,235.5 472.7,236.2 478.9,239.6 C485.1,243.0 487.0,246.7 489.5,248.8" stroke-width="2.6"/>
<path d="M460.4,258.1 C464.1,263.0 467.0,270.0 476.3,279.3 C485.6,288.6 492.1,295.3 500.1,297.8 C508.1,300.3 508.2,291.7 510.7,289.9" stroke-width="2.6"/>
<path d="M505.4,231.6 C509.1,237.2 515.7,244.3 521.3,255.4 C526.9,266.5 527.4,273.7 529.2,279.3" stroke-width="1.6"/>
<path d="M489.5,213.1 C493.2,217.4 501.7,227.3 505.4,231.6" stroke-width="1.6"/>
<path d="M388.9,218.4 C395.1,221.5 406.7,223.0 415.4,231.6 C424.1,240.2 424.8,244.3 426.0,255.4 C427.2,266.5 419.5,268.8 420.7,279.3 C421.9,289.8 430.0,289.5 431.2,300.4 C432.4,311.3 427.2,319.9 426.0,325.9" stroke-width="2"/>
<path d="M426.0,255.4 C429.7,256.0 433.8,257.5 441.8,258.1 C449.8,258.7 456.1,258.1 460.4,258.1" stroke-width="2"/>
<path d="M373.0,236.9 C376.7,238.7 382.7,238.6 388.9,244.8 C395.1,251.0 399.5,254.1 399.5,263.4 C399.5,272.7 391.4,279.7 388.9,284.6" stroke-width="2"/>
<path d="M399.5,263.4 C404.4,267.1 415.8,275.6 420.7,279.3" stroke-width="2"/>
<path d="M433.9,205.1 C432.1,200.2 432.8,192.0 426.0,184.0 C419.2,176.0 409.7,173.8 404.8,170.7" stroke-width="1.6"/>
<path d="M452.4,210.4 C454.9,216.0 460.5,228.7 463.0,234.3" stroke-width="1.6"/>
<path d="M452.4,210.4 C458.6,207.9 470.9,199.8 478.9,199.8 C486.9,199.8 485.0,207.9 486.8,210.4" stroke-width="1.4"/>
<path d="M237.3,290.6 C241.6,296.3 245.6,304.8 255.6,315.0 C265.6,325.2 273.0,333.4 280.1,334.5 C287.2,335.6 283.9,329.0 286.2,319.9 C288.5,310.8 290.2,306.8 289.9,295.4 C289.6,284.0 286.1,276.7 285.0,271.0" stroke-width="2.2"/>
<path d="M280.1,334.5 C281.2,339.1 284.4,343.8 285.0,354.1 C285.6,364.4 282.2,365.9 282.5,378.5 C282.8,391.1 285.3,401.0 286.2,407.9" stroke-width="2.2"/>
<path d="M237.3,290.6 C237.6,295.2 239.4,300.4 238.5,310.1 C237.6,319.8 233.6,321.8 233.6,332.1 C233.6,342.4 236.8,343.8 238.5,354.1 C240.2,364.4 241.0,365.8 241.0,376.1 C241.0,386.4 239.1,393.0 238.5,398.1" stroke-width="2.2"/>
<path d="M238.5,354.1 C243.6,355.2 249.7,359.0 260.5,359.0 C271.4,359.0 279.3,355.2 285.0,354.1" stroke-width="2.2"/>
<path d="M233.6,332.1 C229.6,334.4 223.9,341.9 216.5,341.9 C209.1,341.9 207.0,338.4 201.9,332.1 C196.8,325.8 196.2,319.0 194.5,315.0" stroke-width="2.2"/>
<path d="M201.9,332.1 C200.2,336.7 194.5,343.0 194.5,351.6 C194.5,360.2 195.0,360.8 201.9,368.8 C208.8,376.8 218.8,381.9 223.9,385.9" stroke-width="2.2"/>
<path d="M206.8,300.3 C213.9,300.9 230.2,302.2 237.3,302.8" stroke-width="2.2"/>
<path d="M206.8,300.3 C205.7,294.6 203.0,281.6 201.9,275.9" stroke-width="2.2"/>
<path d="M206.8,300.3 C203.9,303.7 200.8,311.0 194.5,315.0 C188.2,319.0 183.3,316.8 179.9,317.4" stroke-width="2.2"/>
<path d="M286.2,319.9 C291.6,318.2 298.3,312.5 309.4,312.5 C320.5,312.5 325.8,314.8 333.8,319.9 C341.8,325.0 341.3,331.1 343.6,334.5" stroke-width="2.2"/>
<path d="M309.4,312.5 C307.1,306.2 296.2,295.4 299.6,285.7 C303.0,276.0 318.4,274.4 324.1,271.0" stroke-width="2.2"/>
<path d="M333.8,319.9 C337.2,315.3 345.6,310.0 348.5,300.3 C351.4,290.6 346.7,283.4 346.1,278.3" stroke-width="2.2"/>
<path d="M285.0,354.1 C290.7,357.5 299.1,363.1 309.4,368.8 C319.7,374.5 324.4,376.2 329.0,378.5" stroke-width="2.2"/>
<path d="M241.0,376.1 C237.0,378.4 227.9,383.6 223.9,385.9" stroke-width="2.2"/>
<path d="M177.4,332.1 C180.3,337.2 185.7,349.6 189.7,354.1 C193.7,358.7 193.4,352.2 194.5,351.6" stroke-width="2.2"/>
<path d="M433.6,285.7 C431.9,293.7 425.7,306.2 426.3,319.9 C426.9,333.6 434.4,331.8 436.1,344.3 C437.8,356.8 434.2,366.8 433.6,373.6" stroke-width="2.4"/>
<path d="M480.1,280.8 C484.7,284.2 492.2,292.6 499.6,295.4 C507.0,298.2 509.0,293.6 511.8,293.0" stroke-width="2.4"/>
<path d="M511.8,293.0 C514.7,299.3 521.8,306.2 524.1,319.9 C526.4,333.6 525.0,339.1 521.6,351.6 C518.2,364.1 512.2,368.5 509.4,373.6" stroke-width="2.6"/>
<path d="M409.2,319.9 C413.2,319.9 422.3,319.9 426.3,319.9" stroke-width="2"/>
<path d="M353.0,300.3 C358.7,302.6 364.3,305.5 377.4,310.1 C390.5,314.7 401.8,317.6 409.2,319.9" stroke-width="2"/>
<path d="M433.6,285.7 C438.7,284.6 444.8,281.9 455.6,280.8 C466.5,279.7 474.4,280.8 480.1,280.8" stroke-width="2"/>
</g></defs>
<g clip-path="url(#dc)" style="mix-blend-mode:hard-light"><g filter="url(#lit)"><rect x="140" y="130" width="430" height="310" fill="#fff"/><use href="#ck" stroke="#000"/></g></g>
<g clip-path="url(#dc)" style="mix-blend-mode:hard-light" opacity=".52"><g filter="url(#lit2)"><rect x="140" y="130" width="430" height="310" fill="#fff"/><use href="#ck" stroke="#000" stroke-width="4"/></g></g>
<g clip-path="url(#dc)" filter="url(#bl)" opacity=".26"><use href="#ck" stroke="#3a3a40"/></g>
<path d="M217.3,250.1 C219.0,250.5 221.6,258.3 221.3,263.4 C221.0,268.5 217.1,274.0 215.5,280.6 C213.9,287.2 213.8,299.4 211.8,303.1 C209.8,306.9 204.4,307.1 203.3,303.1 C202.2,299.1 204.1,286.4 205.4,279.3 C206.7,272.2 209.2,265.6 211.2,260.7 C213.2,255.8 215.6,249.7 217.3,250.1 Z" fill="#4a4d50" filter="url(#bl)"/>
<defs><linearGradient id="hg" x1="0" y1="0" x2="0" y2="1"><stop offset="0" stop-color="#55575a"/><stop offset=".5" stop-color="#3d3e40"/><stop offset="1" stop-color="#38393a"/></linearGradient></defs>
<path d="M404.0,202.0 C403.5,203.8 400.9,205.6 398.4,207.1 C395.9,208.6 392.2,209.8 389.1,211.0 C386.0,212.2 383.0,213.3 379.6,214.4 C376.2,215.5 372.8,216.8 368.5,217.7 C364.2,218.6 359.0,219.4 354.0,219.6 C349.0,219.8 343.4,219.3 338.5,218.7 C333.6,218.1 328.8,217.3 324.6,216.2 C320.4,215.1 316.5,213.8 313.5,212.3 C310.5,210.8 308.0,209.1 306.4,207.4 C304.8,205.7 304.0,203.8 304.0,202.0 C304.0,200.2 304.8,198.3 306.4,196.6 C308.0,194.9 310.5,193.2 313.5,191.7 C316.5,190.2 320.4,188.9 324.6,187.8 C328.8,186.7 333.6,185.9 338.5,185.3 C343.4,184.7 348.8,184.4 354.0,184.4 C359.2,184.4 364.6,184.7 369.5,185.3 C374.4,185.9 379.2,186.7 383.4,187.8 C387.6,188.9 391.5,190.2 394.5,191.7 C397.5,193.2 400.0,194.9 401.6,196.6 C403.2,198.3 404.5,200.2 404.0,202.0 Z" fill="url(#hg)"/>
<path d="M404.0,202.0 C403.5,203.8 400.9,205.6 398.4,207.1 C395.9,208.6 392.2,209.8 389.1,211.0 C386.0,212.2 383.0,213.3 379.6,214.4 C376.2,215.5 372.8,216.8 368.5,217.7 C364.2,218.6 359.0,219.4 354.0,219.6 C349.0,219.8 343.4,219.3 338.5,218.7 C333.6,218.1 328.8,217.3 324.6,216.2 C320.4,215.1 316.5,213.8 313.5,212.3 C310.5,210.8 308.0,209.1 306.4,207.4 C304.8,205.7 304.0,203.8 304.0,202.0 C304.0,200.2 304.8,198.3 306.4,196.6 C308.0,194.9 310.5,193.2 313.5,191.7 C316.5,190.2 320.4,188.9 324.6,187.8 C328.8,186.7 333.6,185.9 338.5,185.3 C343.4,184.7 348.8,184.4 354.0,184.4 C359.2,184.4 364.6,184.7 369.5,185.3 C374.4,185.9 379.2,186.7 383.4,187.8 C387.6,188.9 391.5,190.2 394.5,191.7 C397.5,193.2 400.0,194.9 401.6,196.6 C403.2,198.3 404.5,200.2 404.0,202.0 Z" fill="none" stroke="#8a8c8e" stroke-width="1.5" opacity=".45" filter="url(#bl)"/>
<path d="M375,400.5 C380.5,399.3 379.7,403.4 385,403 C390.3,402.6 400.5,400.5 407,398 C413.5,395.5 419.6,391.7 424,388 C428.4,384.3 432.4,378.8 433.6,376 C434.8,373.2 433.9,373.8 431,371 C428.1,368.2 420.2,363.5 416.5,359 C412.8,354.5 411.2,348.8 409,344 C406.8,339.2 405.2,334.0 403,330 C400.8,326.0 399.0,321.5 396,320 C393.0,318.5 389.7,319.0 385,321 C380.3,323.0 373.3,327.7 368,332 C362.7,336.3 357.3,342.2 353,347 C348.7,351.8 344.8,356.7 342,361 C339.2,365.3 337.6,368.5 336,373 C334.4,377.5 332.2,382.8 332.6,388 C333.1,393.2 335.5,400.3 338.7,404 C341.9,407.7 345.9,410.6 352,410 C358.1,409.4 369.5,401.7 375,400.5 Z" fill="#3b3d40" opacity=".93"/>
<path d="M359,348 L365,371 L376,407" fill="none" stroke="#6f9fb8" stroke-width="2.2" opacity=".75" filter="url(#bl)"/>
<path d="M167.7,302 C168.5,297.5 168.9,286.2 171,278 C173.1,269.8 176.1,261.2 180,253 C183.9,244.8 189.2,236.3 194.5,229 C199.8,221.7 206.8,214.3 212,209 C217.2,203.7 221.6,200.2 226,197 C230.4,193.8 233.2,192.8 238.5,190 C243.8,187.2 251.9,183.3 258,180 C264.1,176.7 269.7,172.8 275,170 C280.3,167.2 285.8,165.2 290,163 C294.2,160.8 294.3,158.7 300,157 C305.7,155.3 315.9,154.0 324,153 C332.1,152.0 340.3,151.2 348.5,151 C356.7,150.8 367.9,151.5 373,152 C378.1,152.5 376.2,154.5 379,154 C381.8,153.5 385.3,149.8 390,149 C394.7,148.2 401.8,147.5 407,149 C412.2,150.5 417.3,154.8 421,158 C424.7,161.2 424.0,165.6 429,168 C434.0,170.4 444.2,170.7 451,172.5 C457.8,174.3 464.8,176.1 470,179 C475.2,181.9 478.8,185.3 482.5,190 C486.2,194.7 488.3,202.2 492,207 C495.7,211.8 500.0,214.5 504.5,219 C509.0,223.5 514.9,228.3 519,234 C523.1,239.7 525.7,246.5 529,253 C532.3,259.5 536.6,266.8 539,273 C541.4,279.2 542.5,284.5 543.6,290 C544.7,295.5 545.7,300.5 545.5,306 C545.3,311.5 543.7,316.7 542.4,323 C541.1,329.3 539.7,337.7 537.5,344 C535.3,350.3 531.6,356.8 529,361 C526.4,365.2 523.9,367.2 521.6,369 C519.4,370.8 517.6,370.4 515.5,372 C513.4,373.6 513.2,375.3 509,378.5 C504.8,381.7 497.7,386.8 490,391 C482.3,395.2 473.7,400.0 463,404 C452.3,408.0 438.2,411.9 426,415 C413.8,418.1 397.8,421.7 390,422.5 C382.2,423.3 381.5,423.7 379,420 C376.5,416.3 374.0,403.3 375,400.5 C376.0,397.7 379.7,403.4 385,403 C390.3,402.6 400.5,400.5 407,398 C413.5,395.5 419.6,391.7 424,388 C428.4,384.3 432.4,378.8 433.6,376 C434.8,373.2 433.9,373.8 431,371 C428.1,368.2 420.2,363.5 416.5,359 C412.8,354.5 411.2,348.8 409,344 C406.8,339.2 405.2,334.0 403,330 C400.8,326.0 399.0,321.5 396,320 C393.0,318.5 389.7,319.0 385,321 C380.3,323.0 373.3,327.7 368,332 C362.7,336.3 357.3,342.2 353,347 C348.7,351.8 344.8,356.7 342,361 C339.2,365.3 337.6,368.5 336,373 C334.4,377.5 332.2,382.8 332.6,388 C333.1,393.2 335.5,400.3 338.7,404 C341.9,407.7 350.4,406.7 352,410 C353.6,413.3 352.3,421.2 348.5,423.7 C344.7,426.2 337.1,425.6 329,425 C320.9,424.4 310.6,422.2 299.6,420 C288.6,417.8 274.0,414.8 263,411.5 C252.0,408.2 242.9,405.2 233.6,400.5 C224.3,395.8 214.8,388.8 207,383 C199.2,377.2 192.3,371.7 187,366 C181.7,360.3 178.0,355.0 175,349 C172.0,343.0 169.8,335.7 169,330 C168.2,324.3 170.4,319.2 170,315 C169.6,310.8 166.8,307.2 166.4,305 C166.0,302.8 166.9,306.5 167.7,302 Z" fill="none" stroke="#2f8cc0" stroke-width="5" opacity=".55" filter="url(#bl)"/>
<path d="M167.7,302 C168.5,297.5 168.9,286.2 171,278 C173.1,269.8 176.1,261.2 180,253 C183.9,244.8 189.2,236.3 194.5,229 C199.8,221.7 206.8,214.3 212,209 C217.2,203.7 221.6,200.2 226,197 C230.4,193.8 233.2,192.8 238.5,190 C243.8,187.2 251.9,183.3 258,180 C264.1,176.7 269.7,172.8 275,170 C280.3,167.2 285.8,165.2 290,163 C294.2,160.8 294.3,158.7 300,157 C305.7,155.3 315.9,154.0 324,153 C332.1,152.0 340.3,151.2 348.5,151 C356.7,150.8 367.9,151.5 373,152 C378.1,152.5 376.2,154.5 379,154 C381.8,153.5 385.3,149.8 390,149 C394.7,148.2 401.8,147.5 407,149 C412.2,150.5 417.3,154.8 421,158 C424.7,161.2 424.0,165.6 429,168 C434.0,170.4 444.2,170.7 451,172.5 C457.8,174.3 464.8,176.1 470,179 C475.2,181.9 478.8,185.3 482.5,190 C486.2,194.7 488.3,202.2 492,207 C495.7,211.8 500.0,214.5 504.5,219 C509.0,223.5 514.9,228.3 519,234 C523.1,239.7 525.7,246.5 529,253 C532.3,259.5 536.6,266.8 539,273 C541.4,279.2 542.5,284.5 543.6,290 C544.7,295.5 545.7,300.5 545.5,306 C545.3,311.5 543.7,316.7 542.4,323 C541.1,329.3 539.7,337.7 537.5,344 C535.3,350.3 531.6,356.8 529,361 C526.4,365.2 523.9,367.2 521.6,369 C519.4,370.8 517.6,370.4 515.5,372 C513.4,373.6 513.2,375.3 509,378.5 C504.8,381.7 497.7,386.8 490,391 C482.3,395.2 473.7,400.0 463,404 C452.3,408.0 438.2,411.9 426,415 C413.8,418.1 397.8,421.7 390,422.5 C382.2,423.3 381.5,423.7 379,420 C376.5,416.3 374.0,403.3 375,400.5 C376.0,397.7 379.7,403.4 385,403 C390.3,402.6 400.5,400.5 407,398 C413.5,395.5 419.6,391.7 424,388 C428.4,384.3 432.4,378.8 433.6,376 C434.8,373.2 433.9,373.8 431,371 C428.1,368.2 420.2,363.5 416.5,359 C412.8,354.5 411.2,348.8 409,344 C406.8,339.2 405.2,334.0 403,330 C400.8,326.0 399.0,321.5 396,320 C393.0,318.5 389.7,319.0 385,321 C380.3,323.0 373.3,327.7 368,332 C362.7,336.3 357.3,342.2 353,347 C348.7,351.8 344.8,356.7 342,361 C339.2,365.3 337.6,368.5 336,373 C334.4,377.5 332.2,382.8 332.6,388 C333.1,393.2 335.5,400.3 338.7,404 C341.9,407.7 350.4,406.7 352,410 C353.6,413.3 352.3,421.2 348.5,423.7 C344.7,426.2 337.1,425.6 329,425 C320.9,424.4 310.6,422.2 299.6,420 C288.6,417.8 274.0,414.8 263,411.5 C252.0,408.2 242.9,405.2 233.6,400.5 C224.3,395.8 214.8,388.8 207,383 C199.2,377.2 192.3,371.7 187,366 C181.7,360.3 178.0,355.0 175,349 C172.0,343.0 169.8,335.7 169,330 C168.2,324.3 170.4,319.2 170,315 C169.6,310.8 166.8,307.2 166.4,305 C166.0,302.8 166.9,306.5 167.7,302 Z" fill="none" stroke="#3a9bd0" stroke-width="3.3" stroke-linejoin="round"/>
</g>
<path d="M355.1,99 L346.1,111.0 L350.9,111.0 L350.9,136.2 L346.1,136.2 L355.1,148.2 L364.1,136.2 L359.3,136.2 L359.3,111.0 L364.1,111.0 Z" fill="#2f9fd7" stroke="#2a6f95" stroke-width="1.2" stroke-linejoin="round"/>
<path d="M387.9,359.8 L379.6,370.1 L386.5,368.4 L389.9,382.1 L383.0,383.8 L395.1,389.1 L403.4,378.8 L396.5,380.5 L393.1,366.8 L400.0,365.1 Z" fill="#2f9fd7" stroke="#265f80" stroke-width="1.2" stroke-linejoin="round"/>
<path d="M82.6,267 L95.9,274.5 L95.7,269.8 L121.4,268.7 L121.6,273.4 L134.3,264.9 L121.0,257.4 L121.2,262.1 L95.5,263.2 L95.3,258.5 Z" fill="#56c936" stroke="#3d8a2a" stroke-width="1.2" stroke-linejoin="round"/>
<g fill="none" stroke="#8c8c8c" stroke-width="1.4" transform="translate(-7,-109)"><path d="M682.3,143.5 V123.7 H700 M682.3,123.7 L697.3,138.9"/><path d="M731.5,143.5 V123.7 H714 M731.5,123.7 L716,138.9"/><path d="M682.3,154.5 V174.2 H700 M682.3,174.2 L697.3,159"/><path d="M731.5,154.5 V174.2 H714 M731.5,174.2 L716,159"/></g>
<path d="M692.7,277 L705,289.2 L692.7,302.5" fill="none" stroke="#a8a8a8" stroke-width="1.4"/>
</svg>
</div><!--VIEW_END-->
<div class="abs" style="left:19.5px;top:683px;width:79.5px;height:60.5px;border:1.5px solid #3b8fe0;border-radius:4px;background:#3a4550"></div>
<div class="th" style="left:22px;background:linear-gradient(#3a3a3a 0,#3d3d3d 25%,#4a4a4a 60%,#4c4c4c 100%)"><svg class="abs" style="left:0;top:0" width="74" height="55" viewBox="0 0 74 55"><path d="M0,34.5 L74,30.5 M28.5,7 L41.5,55" stroke="#7a7a7a" stroke-width=".6" fill="none"/><path d="M9,26.7 H13.5 M35.5,10.5 V15" stroke="#6dc050" stroke-width="1"/><path d="M35.5,10 V15.5" stroke="#3a98cc" stroke-width="1.2"/><use href="#dm" transform="scale(.1)"/></svg></div>
<div class="th" style="left:114px;background:#40454a"><svg class="abs" style="left:0;top:0" width="74" height="55" viewBox="0 0 74 55"><use href="#dm" transform="translate(-36,-36) scale(.215)"/><rect width="74" height="55" fill="#2c4456" opacity=".16"/></svg></div>
<div class="th" style="left:206px;background:#40454a"><svg class="abs" style="left:0;top:0" width="74" height="55" viewBox="0 0 74 55"><use href="#dm" transform="translate(-117,-89) scale(.36)"/><rect width="74" height="55" fill="#2c4456" opacity=".16"/></svg></div>
<div class="th" style="left:298px;background:#40454a"><svg class="abs" style="left:0;top:0" width="74" height="55" viewBox="0 0 74 55"><use href="#dm" transform="translate(-35,-40) scale(.2,.255)"/><rect width="74" height="55" fill="#2c4456" opacity=".16"/></svg></div>
<div class="th" style="left:390px;background:linear-gradient(#c6c6c6 0,#cbcbcb 40%,#d6d6d6 55%,#d9d9d9 100%)"><svg class="abs" style="left:0;top:0" width="74" height="55" viewBox="0 0 74 55"><defs><filter id="b5"><feGaussianBlur stdDeviation="2"/></filter></defs><ellipse cx="37" cy="36" rx="24" ry="5" fill="#8e8e8e" opacity=".6" filter="url(#b5)"/><path d="M19.5,33 C19,26 24,20.5 31,20 C34,18.6 41,18.6 44,20 C51,20.5 57.5,26 57,33 C55,37.5 48,39.6 38,39.6 C28,39.6 21,37.5 19.5,33 Z" fill="#1f6fd2"/><path d="M24,24 C28,21 33,22 37,21 C42,22 48,21 53,25" stroke="#4a94ec" stroke-width="1.6" fill="none" opacity=".7"/><ellipse cx="37.5" cy="21" rx="4" ry="1.1" fill="#123f80"/><ellipse cx="28.5" cy="31.5" rx="2.6" ry="3" fill="#113a78"/><ellipse cx="50" cy="31" rx="1.8" ry="2.2" fill="#16488f"/><path d="M20,33 C24,37.5 32,39 38,39 C46,39 53,37 57,33" stroke="#154a96" stroke-width="1.5" fill="none" opacity=".7"/></svg></div>
<div id="side"></div>
<div class="btn" style="top:56px"><span style="font-size:11.8px">Download All Files</span>
  <svg class="abs" style="left:10px;top:7px" width="16" height="16" viewBox="0 0 16 16"><path d="M7.2,1 V13.4 M1.6,8 L7.2,13.6 L12.8,8" fill="none" stroke="#fff" stroke-width="1.3"/></svg>
</div>
<div class="sep" style="top:97px;left:767px;width:210px"></div>
<svg class="abs" style="left:782px;top:111px" width="14" height="14" viewBox="0 0 14 14"><path d="M0.8,6.6 H12.6 M6.7,0.7 V12.5" fill="none" stroke="#444" stroke-width="1"/></svg>
<div class="row" style="top:111px;letter-spacing:-0.05px">Collect Thing</div>
<div class="sep" style="top:138px"></div>
<svg class="abs" style="left:778px;top:149px" width="22" height="18" viewBox="0 0 22 18"><path d="M11.2,16.2 C7,13 1.8,9.6 1.8,5.8 C1.8,3.2 3.8,1.6 6.2,1.6 C8.4,1.6 10,2.8 11.2,4.8 C12.4,2.8 14,1.6 16.2,1.6 C18.6,1.6 20.6,3.2 20.6,5.8 C20.6,9.6 15.4,13 11.2,16.2 Z" fill="none" stroke="#666" stroke-width="1.2"/></svg>
<div class="row" style="top:152px;letter-spacing:-0.4px">Like</div>
<svg class="abs" style="left:946px;top:151px" width="16" height="14" viewBox="0 0 16 14"><path d="M1.6,7 H14 M8.8,1.8 L14,7 L8.8,12.2" fill="none" stroke="#555" stroke-width="1.1"/></svg>
<div class="sep" style="top:179px"></div>
<svg class="abs" style="left:778px;top:190px" width="22" height="19" viewBox="0 0 22 19"><path d="M1.8,1.8 H19.6 V13.6 H10 L5,16.4 V13.6 H1.8 Z" fill="none" stroke="#555" stroke-width="1.2" stroke-linejoin="round"/></svg>
<div class="row" style="top:193px;letter-spacing:0.05px">Comment</div>
<div class="sep" style="top:220px"></div>
<svg class="abs" style="left:778px;top:229px" width="22" height="22" viewBox="0 0 22 22"><path d="M1.4,9.2 L11.6,18 L20.6,20.2 L18.8,11.2 L9.2,1.6 M11.6,18 L18.8,11.2 M16.6,19.2 L19.8,16.2" fill="none" stroke="#555" stroke-width="1.1" stroke-linejoin="round"/></svg>
<div class="row" style="top:234px;letter-spacing:-0.15px">Post a Make</div>
<svg class="abs" style="left:946px;top:233px" width="16" height="14" viewBox="0 0 16 14"><path d="M1.6,7 H14 M8.8,1.8 L14,7 L8.8,12.2" fill="none" stroke="#555" stroke-width="1.1"/></svg>
<div class="sep" style="top:261px"></div>
<svg class="abs" style="left:778px;top:273px" width="22" height="16" viewBox="0 0 22 16"><path d="M1.8,7.8 C5,3.4 8,2.4 11,2.4 C14,2.4 17,3.4 20.2,7.8 C17,12.2 14,13.2 11,13.2 C8,13.2 5,12.2 1.8,7.8 Z" fill="none" stroke="#555" stroke-width="1.4"/><circle cx="11" cy="7.8" r="4.6" fill="none" stroke="#555" stroke-width="1.4"/></svg>
<div class="row" style="top:275px">Watch</div>
<div class="sep" style="top:302px"></div>
<svg class="abs" style="left:780px;top:314px" width="18" height="18" viewBox="0 0 18 18"><g fill="none" stroke="#444" stroke-width="1.7"><path d="M5.4,12.8 A5.2,5.2 0 0 1 7.2,3.8"/><path d="M12.6,4.4 A5.2,5.2 0 0 1 10.8,13.4"/></g><path d="M6.6,1.6 L10.2,3.4 L7.2,6 Z M11.4,15.6 L7.8,13.8 L10.8,11.2 Z" fill="#444"/></svg>
<div class="row" style="top:316px;letter-spacing:-0.1px">Remix it</div>
<svg class="abs" style="left:946px;top:315px" width="16" height="14" viewBox="0 0 16 14"><path d="M1.6,7 H14 M8.8,1.8 L14,7 L8.8,12.2" fill="none" stroke="#555" stroke-width="1.1"/></svg>
<div class="sep" style="top:343px"></div>
<svg class="abs" style="left:780px;top:355px" width="18" height="16" viewBox="0 0 18 16"><path d="M2.4,7.4 V13.4 H15 V7.4 M8.7,11 V2.6 M5.4,5.8 L8.7,2.4 L12,5.8" fill="none" stroke="#555" stroke-width="1.1"/></svg>
<div class="row" style="top:357px;letter-spacing:-0.05px">Copy Link</div>
<div class="sep" style="top:384px"></div>
<div class="btn" style="top:394px"><span style="font-size:11.7px">Tip Designer</span>
  <svg class="abs" style="left:8px;top:6px" width="18" height="18" viewBox="0 0 18 18"><path d="M1.6,7.2 H4.6 V16 H1.6 Z M6.4,16 V7.4 L9.4,5.6 L10.8,1.8 Q13.4,1.6 12.6,5.2 L12.2,7 H15.6 Q16.6,7 16.4,8.2 L15.6,15 Q15.4,16 14.4,16 Z" fill="none" stroke="#fff" stroke-width="1.1" stroke-linejoin="round"/></svg>
</div>
<div id="report"><span style="position:absolute;left:34px;top:8.5px;font-size:11.8px;-webkit-text-stroke:0.35px #fff;white-space:nowrap">Report Thing</span>
  <div class="abs" style="left:15px;top:7px;width:4.5px;height:12px;background:#fff"></div>
  <div class="abs" style="left:15px;top:20.5px;width:4.5px;height:3.5px;background:#fff"></div>
</div>
<div id="share"></div>
<div class="abs gs" style="left:776.5px;top:497px;font-size:17.7px;color:#555;white-space:nowrap">Share this thing</div>
<div class="circ" style="left:777px"></div>
<div class="circ" style="left:827px"></div>
<div class="circ" style="left:877px"></div>
<div class="circ" style="left:927px"></div>
<svg class="abs" style="left:791px;top:539px" width="12" height="18" viewBox="0 0 12 18"><path d="M7.3,17 V9.8 H9.8 L10.2,6.9 H7.3 V5.1 C7.3,4.2 7.6,3.6 8.8,3.6 H10.3 V1.1 C10,1 9.2,0.9 8.1,0.9 C5.9,0.9 4.4,2.2 4.4,4.7 V6.9 H1.9 V9.8 H4.4 V17 Z" fill="#555"/></svg>
<svg class="abs" style="left:839px;top:540px" width="17" height="16" viewBox="0 0 24 24"><path d="M23.953 4.57a10 10 0 01-2.825.775 4.958 4.958 0 002.163-2.723c-.951.555-2.005.959-3.127 1.184a4.92 4.92 0 00-8.384 4.482C7.69 8.095 4.067 6.13 1.64 3.162a4.822 4.822 0 00-.666 2.475c0 1.71.87 3.213 2.188 4.096a4.904 4.904 0 01-2.228-.616v.06a4.923 4.923 0 003.946 4.827 4.996 4.996 0 01-2.212.085 4.936 4.936 0 004.604 3.417 9.867 9.867 0 01-6.102 2.105c-.39 0-.779-.023-1.17-.067a13.995 13.995 0 007.557 2.209c9.053 0 13.998-7.496 13.998-13.985 0-.21 0-.42-.015-.63A9.935 9.935 0 0024 4.59z" fill="#555"/></svg>
<svg class="abs" style="left:887px;top:538px" width="20" height="20" viewBox="0 0 20 20"><path d="M10.3,1.7 A8,8 0 1 1 6.2,16.6 L1.9,17.9 L3.2,13.8 A8,8 0 0 1 10.3,1.7 Z" fill="none" stroke="#555" stroke-width="1.7" stroke-linejoin="round"/><path d="M7.6,5.6 C6.4,6.4 6.4,8.2 7.8,10.4 C9.2,12.6 11.4,14 13,13.4 C13.8,13 14.2,12.2 14,11.8 L12.2,10.8 L11.2,11.8 C10.2,11.4 9,10.2 8.6,9 L9.4,8 L8.6,5.8 Z" fill="#555"/></svg>
<svg class="abs" style="left:936px;top:539px" width="22" height="18" viewBox="0 0 22 18"><rect x="2.5" y="2.7" width="16.6" height="12.2" rx="2" fill="none" stroke="#555" stroke-width="1.7"/><path d="M3.2,4.6 L10.8,10.2 L18.4,4.6" fill="none" stroke="#555" stroke-width="1.7" stroke-linejoin="round"/></svg>
<div class="ft" style="top:604px;font-size:9.6px"><a>About Thingiverse ®</a>·<a>Legal</a>·<a>Privacy Policy</a>·</div>
<div class="ft" style="top:619px;font-size:9.55px"><a>Contact Us</a>·<a>Developers</a></div>
<div class="ft" style="top:634px;word-spacing:0.85px">©&nbsp; 2022 <a>MakerBot Industries, LLC</a></div>
</body>
</html>
